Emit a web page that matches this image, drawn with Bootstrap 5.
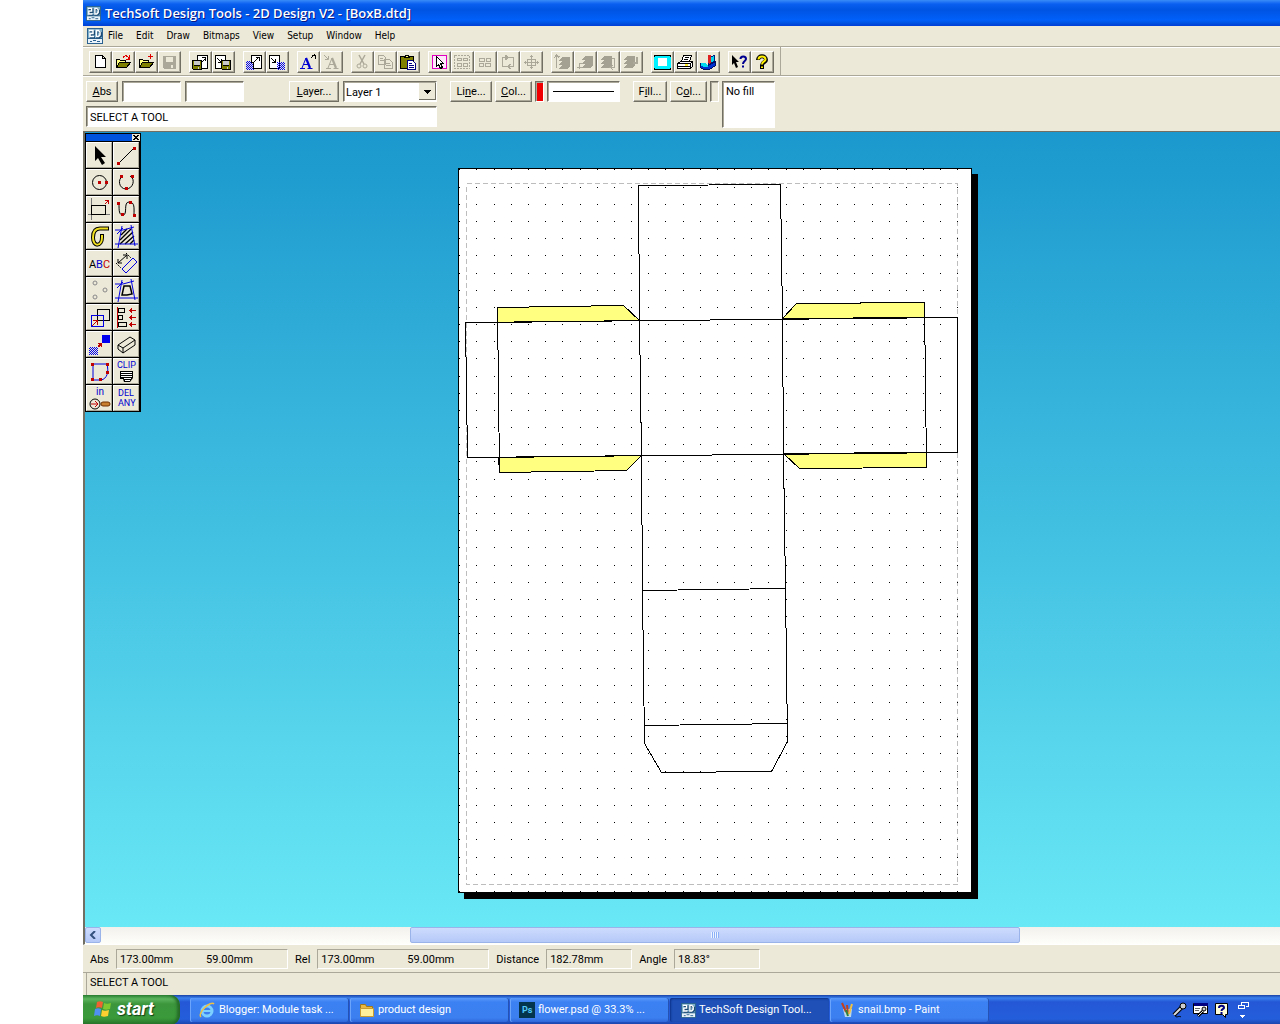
<!DOCTYPE html>
<html lang="en">
<head>
<meta charset="utf-8">
<meta name="viewport" content="width=device-width, initial-scale=1">
<title>TechSoft Design Tools - 2D Design V2</title>
<link href="https://cdn.jsdelivr.net/npm/bootstrap@5.3.0/dist/css/bootstrap.min.css" rel="stylesheet">
<style>
:root{--face:#ece9d8;--lo:#716f64;--mid:#aca899}
body{font-family:Roboto,"Liberation Sans",sans-serif;font-size:11px;line-height:14px;color:#000;background:#fff}
svg{display:block;flex:none;fill:none}
.px{shape-rendering:crispEdges}
.shell{min-height:100vh}
.app{margin-left:83px;background:var(--face);min-width:0}
.titlebar{height:26px;padding-left:3px;gap:4px;background:linear-gradient(#3a8cf8 0,#0a5ff0 4px,#0054e3 10px,#0060fa 20px,#0053e1 23px,#003dd7);color:#fff}
.titlebar h1{font-family:"Open Sans",sans-serif;font-weight:600;font-size:13px;line-height:16px;margin:0;text-shadow:1px 1px #0a1883}
.menus{height:20px;padding-left:4px;gap:5px;font-family:"DejaVu Sans Condensed","DejaVu Sans",sans-serif;font-size:10px}
.menus a{color:#000;text-decoration:none}
.menus nav{gap:13px}
.tools{height:30px;border-top:1px solid var(--mid);border-bottom:1px solid var(--mid);box-shadow:inset 0 1px #fff}
.tools .inner{gap:8px;padding:4px 6px 0;border-right:1px solid var(--mid)}
.btn.key{background:var(--face);border:1px solid;border-color:#fff var(--lo) var(--lo) #fff;box-shadow:inset -1px -1px var(--mid);border-radius:0;font-size:11px;line-height:14px;color:#000;padding:3px 0 2px}
.btn.key.ico{width:23px;height:22px;padding:1px 2px;flex:none}
.opts{padding:4px 3px 3px;border-top:1px solid #fff;border-bottom:1px solid var(--lo)}
.opts .btn{height:21px}
.sunk{border:1px solid;border-color:var(--lo) #fff #fff var(--lo);box-shadow:inset 1px 1px var(--mid);background:#fff;border-radius:0;font-size:11px;line-height:14px;padding:3px 3px 1px;color:#000;height:21px}
.leftset{width:351px;row-gap:4px}
.w32{width:32px}.w34{width:34px}.w37{width:37px}.w42{width:42px}.w50{width:50px}.w59{width:59px}
.optset{gap:3px;margin-left:13px}
.drop{appearance:none;width:94px;padding-left:2px;background:#fff url("data:image/svg+xml,%3Csvg xmlns='http://www.w3.org/2000/svg' width='17' height='17' shape-rendering='crispEdges'%3E%3Cpath fill='%23ece9d8' d='M0 0h17v17H0z'/%3E%3Cpath stroke='%23716f64' fill='none' d='M0 16.500h16.500V0'/%3E%3Cpath d='M5 7h7v1h-1v1h-1v1h-1v1H8v-1H7V9H6V8H5z'/%3E%3C/svg%3E") no-repeat right 0 top 1px}
.swatch{width:9px;padding:0;background:var(--face)}
.swatch.red{background:#f00000}
.linebox{width:73px;padding:0 5px}
.fillbox{width:53px;height:47px}
.desk{background:linear-gradient(#1b98cd,#69e8f6);border-left:2px solid #716f64;height:795px}
.palette{width:56px;border:1px solid #000;background:#000;align-self:flex-start;margin-top:1px}
.palette header{height:7px;background:#0053dc;margin-bottom:1px}
.palette header button{width:8px;height:7px;border:0;padding:0;background:var(--face)}
.palette .keys{display:grid;grid-template-columns:26px 26px;gap:1px}
.palette .btn{height:26px;padding:0;background:var(--face);border-radius:0;border:1px solid;border-color:#fff var(--mid) var(--mid) #fff}
.sheet{margin:36px 0 0 317px}
.hscroll{height:18px;background:linear-gradient(#f3f1ec,#fefefb);border-left:2px solid var(--lo);border-bottom:1px solid #fff}
.hscroll button{border:1px solid #9ab3e8;border-radius:2px;background:linear-gradient(#cddbfd,#b5c9f8);padding:0;height:16px}
.hscroll .arrow{width:16px}
.hscroll .thumb{width:610px;margin-left:309px;display:flex;justify-content:center;align-items:center}
.status{height:28px;border-bottom:1px solid var(--mid);padding:4px 7px 0;gap:7px}
.cell{border:1px solid;border-color:var(--mid) #fff #fff var(--mid);height:20px;padding:3px 3px 1px}
.cell span{flex:0 0 86px}
.status .wide{width:172px}.status .slim{width:86px}
.hint{height:22px;padding:3px 3px;border-left:1px solid var(--mid);margin-left:3px}
.taskbar{height:30px;background:linear-gradient(#1941a5 0,#3a81ee 3px,#2457d6 7px,#245edb 24px,#1941a5);color:#fff}
.start{width:97px;height:30px;border:0;border-radius:0 10px 10px 0;background:linear-gradient(#2f8a3a,#5cb45c 4px,#3c963c 9px,#3a9a3a 23px,#256f2a);color:#fff;padding:0 10px 2px;gap:5px;box-shadow:inset -3px 0 3px #246b28;font-family:Roboto,sans-serif;font-weight:700;font-style:italic;font-size:18px;line-height:20px;text-shadow:1px 1px 1px #123d14}
.tasks{margin-left:10px;gap:1px;padding-top:3px}
.task{width:159px;height:24px;border:0;border-radius:2px;background:linear-gradient(#5b9bfb,#3c81f3 4px,#3b7ff0 20px,#2d66d8);color:#fff;padding:0 9px;gap:3px;font-size:11px;line-height:14px;box-shadow:inset 1px 0 #6aa4fb,inset -1px 0 #2453b5}
.task.on{background:#1e50b7;box-shadow:inset 1px 1px 2px #0d318a;padding-left:11px}
.tray{gap:5px;padding-right:29px}
</style>
<script src="https://cdn.jsdelivr.net/npm/bootstrap@5.3.0/dist/js/bootstrap.bundle.min.js"></script>
</head>
<body>
<svg width="0" height="0" class="position-absolute" aria-hidden="true">
<defs>
<symbol id="logo" viewBox="0 0 16 16"><path fill="#2b6290" d="M0 0h16v16H0z"/><path fill="#7fb0cc" d="M1 1h14v9H1z"/><path stroke="#1c4a74" stroke-width="2" d="M3 3.500h4v3H4v3h4M10 3.500h2l2 1.500v3l-2 1.500h-2z"/><path stroke="#fff" stroke-width="1.500" d="M2 2.500h4v3H3v3h4M9.500 2.500h2L13 4v3l-1.500 1.500h-2z"/><path fill="#e8f2f8" d="M1 11h14v4H1z"/><path stroke="#2b6290" d="M3 13.500h2M6 12.500h3M10 13.500h3"/></symbol>
<symbol id="disk" viewBox="0 0 10 10"><path fill="#000" d="M0 0h10v10H1L0 9z"/><path fill="#808000" d="M1 1h1v5h6V1h1v8H1z"/><path fill="#c8c8c8" d="M2 1h6v4H2zM6 7h1v2H6z"/></symbol>
<symbol id="layers" viewBox="0 0 12 14"><path fill="#a5a192" d="M4 1h8v2l-3 2H1V4zM4 5h8v2L9 9H1V8zM4 9h8v2l-3 2H1v-1z"/><path fill="#a5a192" d="M8 2h4v8H8z"/></symbol>
<pattern id="bluedots" width="2" height="2" patternUnits="userSpaceOnUse"><path fill="#0000f0" d="M0 0h1v1H0zM1 1h1v1H1z"/></pattern>
</defs>
</svg>
<div class="shell d-flex flex-column">
<main class="app d-flex flex-column">
<header class="titlebar d-flex align-items-center"><svg width="15" height="15"><use href="#logo"/></svg><h1>TechSoft Design Tools - 2D Design V2 - [BoxB.dtd]</h1></header>
<div class="menus d-flex align-items-center"><svg width="16" height="16"><use href="#logo"/></svg>
<nav class="d-flex"><a href="#">File</a><a href="#">Edit</a><a href="#">Draw</a><a href="#">Bitmaps</a><a href="#">View</a><a href="#">Setup</a><a href="#">Window</a><a href="#">Help</a></nav></div>

<div class="tools d-flex"><div class="inner d-flex">
<div class="d-flex">
<button class="btn key ico" aria-label="New"><svg class="px" width="16" height="16"><path fill="#fff" stroke="#000" d="M3.500 1.500h7l3 3v9h-10zM10.500 1.500v3h3"/></svg></button>
<button class="btn key ico" aria-label="Open"><svg class="px" width="16" height="16"><path fill="#ffff80" stroke="#000" d="M1.500 13.500v-8h3l1 1h5v3"/><path fill="#808000" stroke="#000" d="M1.500 13.500l3-5h11l-4 5z"/><path stroke="#e00000" d="M8 3.500c2-3 4-2 6 1M14.500 1v4H11"/></svg></button>
<button class="btn key ico" aria-label="Open and add"><svg class="px" width="16" height="16"><path fill="#ffff80" stroke="#000" d="M1.500 13.500v-8h3l1 1h5v3"/><path fill="#808000" stroke="#000" d="M1.500 13.500l3-5h11l-4 5z"/><path stroke="#e00000" d="M12.500 0v5M10 2.500h5"/></svg></button>
<button class="btn key ico" aria-label="Save"><svg class="px" width="16" height="16"><path fill="#aca899" d="M2 2h13v13H3l-1-1z"/><path fill="#ece9d8" d="M5 3h7v5H5zM10 11h2v3h-2z"/></svg></button>
</div><div class="d-flex">
<button class="btn key ico" aria-label="Load from"><svg class="px" width="16" height="16"><path fill="#fff" stroke="#000" d="M5.500 1.500h10v13h-10z"/><path stroke="#000" d="M9 9l5-5M10 3.500h3.500V7"/><use href="#disk" x="0" y="6" width="10" height="10"/></svg></button>
<button class="btn key ico" aria-label="Save to"><svg class="px" width="16" height="16"><path fill="#fff" stroke="#000" d="M.5 1.500h10v13H.5z"/><path stroke="#000" d="M2 4l4 4M3 8.500h3.500V5"/><use href="#disk" x="6" y="6" width="10" height="10"/></svg></button>
</div><div class="d-flex">
<button class="btn key ico" aria-label="Export bitmap"><svg class="px" width="16" height="16"><path fill="url(#bluedots)" d="M0 7h8v9H0z"/><path fill="#fff" stroke="#000" d="M5.500 1.500h10v13h-8v-6h-2z"/><path stroke="#000" d="M8 8l5-5M10 3.500h3.500V7"/></svg></button>
<button class="btn key ico" aria-label="Import bitmap"><svg class="px" width="16" height="16"><path fill="#fff" stroke="#000" d="M.5 1.500h10v13H.5z"/><path stroke="#000" d="M2 4l4 4M3 8.500h3.500V5"/><path fill="url(#bluedots)" d="M8 8h8v8H8z"/></svg></button>
</div><div class="d-flex">
<button class="btn key ico" aria-label="Text out"><svg width="16" height="16"><path stroke="#0000d0" stroke-width="2.200" d="M6 4l4 10"/><path stroke="#0000d0" d="M6 4L2 14M3.500 10.500H9M0 14.500h5M7.500 14.500h5"/><path class="px" stroke="#000" d="M10.500 4.500l4-4M12 1.500h3V5"/></svg></button>
<button class="btn key ico" aria-label="Text in"><svg width="16" height="16"><path stroke="#aca899" stroke-width="2.200" d="M9 4l4 10"/><path stroke="#aca899" d="M9 4L5 14M6.500 10.500H12M3 14.500h5M10.500 14.500h5M1 1l4 4M2 5.500h3.500V2"/></svg></button>
</div><div class="d-flex">
<button class="btn key ico" aria-label="Cut"><svg width="16" height="16"><path stroke="#aca899" stroke-width="1.500" d="M5 1l5 9M11 1L6 10"/><circle cx="5" cy="12" r="2" stroke="#aca899"/><circle cx="11" cy="12" r="2" stroke="#aca899"/></svg></button>
<button class="btn key ico" aria-label="Copy"><svg class="px" width="16" height="16"><path fill="#ece9d8" stroke="#aca899" d="M1.500 1.500h5l2 2v7h-7zM7.500 5.500h5l3 3v6h-8zM3 4.500h3M3 6.500h4M9 9.500h4M9 11.500h5"/></svg></button>
<button class="btn key ico" aria-label="Paste"><svg class="px" width="16" height="16"><path fill="#808000" stroke="#000" d="M.5 2.500h13v12H.5z"/><path fill="#ffff80" stroke="#000" d="M4.500 3.500l1-2h3l1 2z"/><path fill="#fff" stroke="#000080" d="M7.500 6.500h5l3 3v6h-8zM9 9.500h3M9 11.500h5M9 13.500h5"/></svg></button>
</div><div class="d-flex">
<button class="btn key ico" aria-label="Select"><svg class="px" width="16" height="16"><path fill="#ffe6fa" stroke="#e000c0" d="M1 1.500h14v13H1z"/><path fill="#fff" stroke="#000" d="M5.500 2.500v10l2-2 2 4 2-1-2-4h3z"/></svg></button>
<button class="btn key ico" aria-label="Group"><svg class="px" width="16" height="16"><path stroke="#aca899" stroke-dasharray="2 1" d="M.5 1.500h15v13H.5z"/><path stroke="#aca899" d="M3.500 4.500h4v2h-4zM9.500 4.500h4v2h-4zM3.500 9.500h4v3h-4zM9.500 9.500h4v3h-4z"/></svg></button>
<button class="btn key ico" aria-label="Ungroup"><svg class="px" width="16" height="16"><path stroke="#aca899" d="M2.500 4.500h5v3h-5zM9.500 4.500h4v3h-4zM2.500 9.500h4v3h-4zM8.500 9.500h5v3h-5z"/></svg></button>
<button class="btn key ico" aria-label="Rotate"><svg class="px" width="16" height="16"><path stroke="#aca899" d="M7 3.500H2.500v9H8M9 12.500h4.500v-9H9M5.500 1v5M5.500 1L8 3.500 5.500 6M10.500 10L8 12.500l2.500 2.500"/></svg></button>
<button class="btn key ico" aria-label="Centre"><svg class="px" width="16" height="16"><path stroke="#aca899" d="M8.500 1v14M1 8.500h15M7 2.500h3M7 13.500h3M2.500 7v3M14.500 7v3M4.500 5.500h8v6h-8z"/></svg></button>
</div><div class="d-flex">
<button class="btn key ico" aria-label="To front"><svg class="px" width="16" height="16"><use href="#layers" x="4" y="2" width="12" height="14"/><path stroke="#aca899" d="M6 2.500H2.500V14M0 4l2.500-3L5 4"/></svg></button>
<button class="btn key ico" aria-label="Forward"><svg class="px" width="16" height="16"><use href="#layers" x="4" y="1" width="12" height="14"/><path stroke="#aca899" d="M0 13.500h5M2.500 15V9H6"/></svg></button>
<button class="btn key ico" aria-label="Back"><svg class="px" width="16" height="16"><use href="#layers" x="0" y="1" width="12" height="14"/><path stroke="#aca899" d="M12 4.500h2.500v9H11M13 11l-3 2.500 3 2"/></svg></button>
<button class="btn key ico" aria-label="To back"><svg class="px" width="16" height="16"><use href="#layers" x="0" y="1" width="12" height="14"/><path stroke="#aca899" stroke-width="2" d="M10 9h4V3"/></svg></button>
</div><div class="d-flex">
<button class="btn key ico" aria-label="Zoom page"><svg class="px" width="17" height="16"><path fill="#00f0ff" d="M0 2h17v13H0z"/><path fill="#000" d="M0 1h17v1H0zM0 15h17v1H0zM0 2h1v1H0zM16 2h1v1h-1zM0 14h1v1H0zM16 14h1v1h-1z"/><path fill="#fff" d="M4 4h9v8H4z"/></svg></button>
<button class="btn key ico" aria-label="Print"><svg class="px" width="16" height="16"><path fill="#fff" stroke="#000" d="M4.500 7.500l2-6h8l-2 6z"/><path fill="#fff" stroke="#000" d="M.5 9.500l3-2h11l1 2v3l-2 2H.5z"/><path stroke="#000" d="M8 3.500h4M7 5.500h4M1 9.500h12.500v5M13.500 9.500l2-2M1 12.500h12"/><path fill="#ffef30" d="M8 10h3v2H8z"/></svg></button>
<button class="btn key ico" aria-label="Cutter"><svg class="px" width="16" height="16"><path fill="#00d8f0" stroke="#002080" d="M8.500 3.500l6-2v6l-6 2z"/><path fill="#0030d0" stroke="#001060" d="M.5 9.500l7 2 8-4v4l-6 4h-6l-3-2z"/><path fill="#00d8f0" d="M1 9h4l3 2v2H4l-3-1z"/><path fill="#e02020" d="M8 1h3v7l-2 2-1-1z"/></svg></button>
</div><div class="d-flex">
<button class="btn key ico" aria-label="Context help"><svg width="17" height="16"><path fill="#000" d="M1 1l7 7H5l2 5-2 1-2-5-2 2z"/><path stroke="#000090" stroke-width="2" d="M9.500 5c0-3.500 5.500-3.500 5.500 0 0 2-3 2-3 5M12 11.500v2"/></svg></button>
<button class="btn key ico" aria-label="Help"><svg width="16" height="16"><path stroke="#000" stroke-width="4" d="M4 6c0-5 8-5 8 0 0 2-4 2-4 5M8 11v4"/><path stroke="#fff000" stroke-width="2" d="M4.500 5.500c0-4 7-4 7 0 0 2-3.500 2-3.500 5M8 12.500V14"/></svg></button>
</div></div></div>

<section class="opts d-flex align-items-start">
<div class="leftset d-flex flex-wrap align-items-start">
<button class="btn key w32"><u>A</u>bs</button>
<input class="sunk w59 ms-1" aria-label="X"><input class="sunk w59 ms-1" aria-label="Y">
<button class="btn key w50 ms-auto"><u>L</u>ayer...</button>
<select class="sunk drop ms-1" aria-label="Layer"><option>Layer 1</option></select>
<input class="sunk w-100" aria-label="Prompt" value="SELECT A TOOL">
</div>
<div class="d-flex optset align-items-start">
<button class="btn key w42">Li<u>n</u>e...</button><button class="btn key w37"><u>C</u>ol...</button>
<button class="sunk swatch red" aria-label="Line colour"></button>
<div class="sunk linebox d-flex align-items-center"><svg class="px flex-fill" width="61" height="1"><path fill="#000" d="M0 0h61v1H0z"/></svg></div>
</div>
<div class="d-flex optset align-items-start">
<button class="btn key w34">F<u>i</u>ll...</button><button class="btn key w37">C<u>o</u>l...</button>
<button class="sunk swatch" aria-label="Fill colour"></button>
<div class="sunk fillbox">No fill</div>
</div>
</section>

<section class="desk d-flex">
<aside class="palette">
<header class="d-flex justify-content-end"><button aria-label="Close"><svg class="px" width="8" height="7"><path stroke="#000" d="M1.500 1l5 5M6.500 1l-5 5"/></svg></button></header>
<div class="keys">
<button class="btn" aria-label="Select"><svg width="24" height="24"><path fill="#000" d="M8 3v15l3-3 4 7 3-2-4-6h5z"/></svg></button>
<button class="btn" aria-label="Line"><svg width="24" height="24"><path stroke="#000" d="M5 20L20 5"/><path fill="#c00000" d="M3 19h3v3H3zM19 4h3v3h-3z"/></svg></button>
<button class="btn" aria-label="Circle"><svg width="24" height="24"><circle cx="12.500" cy="12.500" r="7" stroke="#000"/><path fill="#c00000" d="M11 11h3v3h-3zM18 11h3v3h-3z"/></svg></button>
<button class="btn" aria-label="Arc"><svg width="24" height="24"><path stroke="#000" d="M9 6C3 9 5 19 12 19s10-10 4-13"/><path fill="#c00000" d="M6 5h3v3H6zM17 5h3v3h-3zM11 17h3v3h-3z"/></svg></button>
<button class="btn" aria-label="Rectangle"><svg class="px" width="24" height="24"><path stroke="#777" d="M4.500 1v22M1 17.500h22"/><path stroke="#000" d="M4.500 8.500h14v9h-14z"/><path stroke="#c00000" d="M18 7l3-3M18 3.500h3.500V7"/></svg></button>
<button class="btn" aria-label="Curve"><svg width="24" height="24"><path stroke="#000" d="M5 6c0 8 0 12 4 12 5 0 0-13 6-13 6 0 5 6 5 13"/><path fill="#c00000" d="M3 5h3v3H3zM15 4h3v3h-3zM7 16h3v3H7zM19 17h3v3h-3z"/></svg></button>
<button class="btn" aria-label="Path"><svg width="24" height="24"><path stroke="#000" stroke-width="4" d="M22 4.500h-9c-6 0-7 5-7 9 0 10 9 9 9 0V10"/><path stroke="#f0e020" stroke-width="2" d="M21 4.500h-8c-6 0-7 5-7 9 0 10 9 9 9 0V11"/></svg></button>
<button class="btn" aria-label="Hatch"><svg width="24" height="24"><path stroke="#000" stroke-width="1.400" d="M7 11l6-6M6 16L17 5M6 20L19 8M11 20l9-8M16 20l4-4"/><path stroke="#0000e0" d="M1 6h8l11-3M8 2L4 24M17 1l4 21M1 20h23M9 4L3 10"/></svg></button>
<button class="btn" aria-label="Text"><svg width="24" height="24"><g font-size="11" font-family="Roboto"><text x="2" y="17" fill="#000">A</text><text x="9" y="17" fill="#0000d0">B</text><text x="16" y="17" fill="#c00000">C</text></g></svg></button>
<button class="btn" aria-label="Dimension"><svg width="24" height="24"><path stroke="#000" stroke-dasharray="2 1" d="M2 12l5 5M12 2l5 5"/><path stroke="#000" d="M4 12l9-8M4 8v4h4M9 4h4v4"/><path stroke="#0000e0" d="M8 18L19 7l4 4-11 11z"/></svg></button>
<button class="btn" aria-label="Points"><svg width="24" height="24"><g stroke="#888"><circle cx="8" cy="5" r="2"/><circle cx="18" cy="12" r="2"/><circle cx="8" cy="19" r="2"/></g></svg></button>
<button class="btn" aria-label="Contour"><svg width="24" height="24"><path stroke="#0000e0" d="M1 6h8l11-3M8 2L4 24M17 1l4 21M1 20h23M9 4L3 10"/><path stroke="#000" stroke-width="1.500" d="M10 8h6l2 8-5 1H8z"/></svg></button>
<button class="btn" aria-label="Move"><svg class="px" width="24" height="24"><path stroke="#000" d="M10.500 4.500h12v11h-12z"/><path stroke="#0000e0" d="M4.500 10.500h12v11h-12z"/><path stroke="#c00000" d="M5 21l5-5M6 15.500h4.500V20"/></svg></button>
<button class="btn" aria-label="Align"><svg class="px" width="24" height="24"><path stroke="#c00000" d="M3.500 2v21M17 5.500h5M17 12.500h5M17 19.500h5"/><path fill="#c00000" d="M15 5h1V4h1V3h1v5h-1V7h-1V6h-1zM15 12h1v-1h1v-1h1v5h-1v-1h-1v-1h-1zM15 19h1v-1h1v-1h1v5h-1v-1h-1v-1h-1z"/><path stroke="#000" d="M4.500 3.500h6v4h-6zM4.500 10.500h4v4h-4zM4.500 17.500h8v4h-8z"/></svg></button>
<button class="btn" aria-label="Transform"><svg class="px" width="24" height="24"><path fill="#0000f0" d="M15 3h8v8h-8z"/><path fill="url(#bluedots)" d="M2 15h9v8H2z"/><path stroke="#c00000" stroke-width="2" d="M11 15l3-3"/><path fill="#c00000" d="M11 11h4v4h-1v-1h-1v-1h-1v-1h-1z"/></svg></button>
<button class="btn" aria-label="Extrude"><svg width="24" height="24"><path stroke="#000" d="M4 13l12-8 5 3v5l-12 8-5-4zM4 13l5 3v5M9 16l12-8"/></svg></button>
<button class="btn" aria-label="Edit"><svg width="24" height="24"><path stroke="#0000e0" d="M6 5h14c2 8 0 15-6 16H6z"/><path fill="#c00000" d="M4 4h3v3H4zM19 4h3v3h-3zM4 19h3v3H4zM12 19h3v3h-3zM19 12h3v3h-3z"/></svg></button>
<button class="btn" aria-label="Clip"><svg width="24" height="24"><text x="3" y="9" font-size="9" font-family="Roboto" fill="#0000d0">CLIP</text><path fill="#000" d="M6 12h13v7l-3 4h-6l-1-3H6z"/><path class="px" stroke="#fff" d="M7 13.500h11M7 15.500h11M7 17.500h11M10 19.500h7M11 21.500h5"/></svg></button>
<button class="btn" aria-label="Attach"><svg width="24" height="24"><text x="9" y="9" font-size="10" font-family="Roboto" fill="#0000d0">in</text><circle cx="8" cy="18" r="5" stroke="#000"/><path stroke="#c00000" d="M4 18h7M8 15l3 3-3 3"/><rect x="14" y="16" width="9" height="4" rx="2" fill="#c88030" stroke="#703000"/></svg></button>
<button class="btn" aria-label="Delete any"><svg width="24" height="24"><g font-size="9" font-family="Roboto" fill="#0000d0"><text x="4" y="10">DEL</text><text x="4" y="20">ANY</text></g></svg></button>
</div>
</aside>
<svg class="sheet px" width="520" height="731" viewBox="458 168 520 731" role="img" aria-label="BoxB net">
<path fill="#000" d="M464 174h514v725H464z"/><path fill="#fff" stroke="#000" d="M458.500 168.500h513v724h-513z"/>
<path stroke="#bdbdbd" stroke-dasharray="5 3" d="M466.500 183.500h491v701h-491z"/>
<path id="dots" fill="#000"/>
<g fill="#ffff80" stroke="#000"><path d="M497.500 307.500l126-2 16 15-142 2zM498.500 457.500l143-2-15 15-127 2zM782.500 318.500l14-15 128-1v15zM783.500 453.500l143-1v15l-127 1z"/></g>
<g stroke="#000"><path d="M638.500 185.500l142-1 2 134 1 135 2 135 2 153-16 30-110 1-17-29-2-153-1-135-2-135zM465.500 322.500l492-5v135l-490 5zM497.500 307.500l2 165M924.500 302.500l2 165M642.500 590.500l143-2M644.500 725.500l143-2"/></g>
</svg>
</section>
<div class="hscroll d-flex"><button class="arrow" aria-label="Scroll left"><svg class="mx-auto" width="8" height="8"><path stroke="#33507e" stroke-width="2" d="M6 0L2 4l4 4"/></svg></button><button class="thumb" aria-label="Scroll thumb"><svg class="px" width="8" height="6"><path stroke="#eef4fe" d="M.5 0v6M2.500 0v6M4.500 0v6M6.500 0v6"/><path stroke="#8cb0f8" d="M1.500 0v6M3.500 0v6M5.500 0v6M7.500 0v6"/></svg></button></div>
<footer class="status d-flex"><span class="pt-1">Abs</span><div class="cell wide d-flex"><span>173.00mm</span><span>59.00mm</span></div><span class="pt-1">Rel</span><div class="cell wide d-flex"><span>173.00mm</span><span>59.00mm</span></div><span class="pt-1">Distance</span><div class="cell slim">182.78mm</div><span class="pt-1">Angle</span><div class="cell slim">18.83°</div></footer>
<div class="hint">SELECT A TOOL</div>
<nav class="taskbar d-flex align-items-stretch">
<button class="start d-flex align-items-center"><svg width="19" height="18"><path fill="#f06030" d="M4 2c2-1 4-1 6 0L9 8C7 7 5 7 3 8z"/><path fill="#80c830" d="M11 3c2 1 4 1 7 0l-1 6c-3 1-5 1-7 0z"/><path fill="#5090f0" d="M2 9c2-1 4-1 6 0l-1 7c-2-1-4-1-6 0z"/><path fill="#fcd030" d="M9 10c2 1 4 1 7 0l-1 6c-3 1-5 1-7 0z"/></svg>start</button>
<div class="tasks d-flex">
<button class="task d-flex align-items-center"><svg width="17" height="16"><circle cx="8" cy="9" r="5" stroke="#7cd0ff" stroke-width="3"/><path stroke="#7cd0ff" stroke-width="2" d="M4 9h9"/><path stroke="#f0c040" stroke-width="1.500" d="M2 15C-2 11 12-2 15 2"/></svg>Blogger: Module task ...</button>
<button class="task d-flex align-items-center"><svg width="16" height="16"><path fill="#e8b840" stroke="#a07818" d="M1.500 13.500v-11h5l1 2h6v9z"/><path fill="#fff09c" stroke="#c89c30" d="M1.500 14.500v-8h13v8z"/></svg>product design</button>
<button class="task d-flex align-items-center"><svg width="16" height="16"><path fill="#04354e" d="M0 0h16v16H0z"/><text x="3" y="11" font-size="9" font-weight="700" fill="#50c8f8">Ps</text></svg>flower.psd @ 33.3% ...</button>
<button class="task on d-flex align-items-center"><svg width="15" height="15"><use href="#logo"/></svg>TechSoft Design Tool...</button>
<button class="task d-flex align-items-center"><svg width="16" height="16"><path fill="#bcd8e8" d="M4 7h9l-1 8H6z"/><path stroke="#c04020" stroke-width="2" d="M7 10L3 1M9 12L8 3"/><path stroke="#f0c040" stroke-width="2" d="M10 12l3-10"/><path stroke="#308040" stroke-width="2" d="M7 8l2 6"/></svg>snail.bmp - Paint</button>
</div>
<div class="tray d-flex align-items-center ms-auto">
<svg width="16" height="16"><path stroke="#000" stroke-width="4" d="M2 13l8-8"/><path stroke="#ddd" stroke-width="2" d="M2 13l8-8"/><circle cx="11" cy="4" r="3" fill="#ccc" stroke="#000"/><path stroke="#000" d="M3 13c1 4 4 0 6 2"/></svg>
<svg width="16" height="16"><path fill="#fff" stroke="#000" d="M.5 1.500h14v10H.5z"/><path fill="#000080" d="M1 1h14v3H1z"/><path stroke="#666" d="M2 6.500h5M2 8.500h4"/><path stroke="#000" stroke-width="3" d="M5 14l5-5"/><path stroke="#ddd" d="M5 14l5-5"/><circle cx="11" cy="7" r="2" fill="#ccc" stroke="#000"/></svg>
<svg width="16" height="16"><path fill="#ffffd8" stroke="#000" d="M1.500 1.500h12v11h-2v3l-3-3h-7z"/><path stroke="#000080" stroke-width="2" d="M5 6c0-3 5-3 5 0 0 1-2.500 1-2.500 3M7.500 10v2"/></svg>
<svg class="px" width="16" height="18"><path stroke="#fff" d="M6.500 4.500v-3h7v4h-3M3.500 4.500h6v3h-6z"/><path fill="#fff" d="M5 14h5l-2.500 3z"/></svg>
</div>
</nav>
</main>
</div>
<script>
let d='';
for(let r=0;r<43;r++)for(let c=0;c<30;c++)d+=`M${Math.floor(459.76+17.178*c)} ${Math.floor(169.94+17.178*r)}h1v1h-1z`;
document.getElementById('dots').setAttribute('d',d);
</script>
</body>
</html>
